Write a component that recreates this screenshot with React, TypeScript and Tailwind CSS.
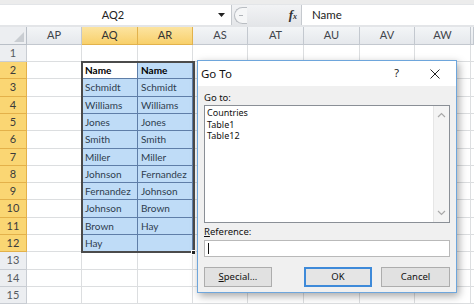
import React from 'react';

const COLS = [
  { n: 'AP', w: 'w-[55px]', sel: false },
  { n: 'AQ', w: 'w-[56px]', sel: true },
  { n: 'AR', w: 'w-[55px]', sel: true },
  { n: 'AS', w: 'w-[55px]', sel: false },
  { n: 'AT', w: 'w-[56px]', sel: false },
  { n: 'AU', w: 'w-[56px]', sel: false },
  { n: 'AV', w: 'w-[55px]', sel: false },
  { n: 'AW', w: 'w-[56px]', sel: false },
  { n: '', w: 'flex-1', sel: false },
];

const ROW_H = [
  'h-[17px]', 'h-[17px]', 'h-[18px]', 'h-[17px]', 'h-[17px]', 'h-[18px]', 'h-[17px]', 'h-[17px]',
  'h-[17px]', 'h-[18px]', 'h-[17px]', 'h-[17px]', 'h-[18px]', 'h-[17px]', 'h-[17px]',
];

const AQ = ['Name', 'Schmidt', 'Williams', 'Jones', 'Smith', 'Miller', 'Johnson', 'Fernandez', 'Johnson', 'Brown', 'Hay'];
const AR = ['Name', 'Schmidt', 'Williams', 'Jones', 'Smith', 'Miller', 'Fernandez', 'Johnson', 'Brown', 'Hay', ''];

const cellFont = { fontFamily: 'Lato, "Liberation Sans", sans-serif' };
const uiFont = { fontFamily: '"Noto Sans", "Open Sans", sans-serif' };

function GridRow({ r }: { r: number }) {
  const selRow = r >= 2 && r <= 12;
  return (
    <div className={`flex ${ROW_H[r - 1]}`}>
      <div
        className={`w-[27px] shrink-0 flex items-center justify-center border-r border-b text-[11px] ${
          selRow ? 'bg-[#fad673] border-[#e3b14a] text-[#3b3b3b]' : 'bg-[#eceef1] border-[#c9cdd3] text-[#555a60]'
        }`}
      >
        {r}
      </div>
      {COLS.map((c) => {
        const inTable = selRow && c.sel;
        const val = inTable ? (c.n === 'AQ' ? AQ[r - 2] : AR[r - 2]) : '';
        const isHead = r === 2 && inTable;
        const active = r === 2 && c.n === 'AQ';
        return (
          <div
            key={c.n}
            className={`${c.w} shrink-0 flex items-center pl-[3px] border-r border-b overflow-hidden whitespace-nowrap text-[10px] ${
              inTable
                ? `${active ? 'bg-white' : 'bg-[#bfdcf7]'} border-[#5f7ea8]`
                : 'bg-white border-[#dcdee0]'
            } ${isHead ? 'font-bold text-black' : 'text-[#2e3d4f]'}`}
          >
            {val}
          </div>
        );
      })}
    </div>
  );
}

function Chevron({ up }: { up: boolean }) {
  return (
    <svg width="9" height="6" viewBox="0 0 9 6">
      <path
        d={up ? 'M1 5 L4.5 1.5 L8 5' : 'M1 1 L4.5 4.5 L8 1'}
        fill="none"
        stroke="#a9a9a9"
        strokeWidth="1.2"
      />
    </svg>
  );
}

export default function App() {
  const rows = Array.from({ length: 15 }, (_, i) => i + 1);
  return (
    <div className="relative w-[474px] h-[305px] overflow-hidden bg-white" style={cellFont}>
      {/* formula bar */}
      <div className="h-[27px] bg-[#e3e5e8] border-t-[4px] border-[#ececec] pt-[1px] pb-[2px]">
        <div className="flex h-[20px]">
          <div className="w-[232px] flex items-center bg-white border-r border-[#c5c9ce]">
            <div className="flex-1 text-center pl-[8px] text-[11px] text-[#222]">AQ2</div>
            <svg width="7" height="4" viewBox="0 0 7 4" className="mr-[6px]">
              <path d="M0 0 L7 0 L3.5 4 Z" fill="#222" />
            </svg>
          </div>
          <div className="w-[70px] flex items-center bg-gradient-to-b from-[#f2f3f5] to-[#e4e6e9] border-r border-[#c5c9ce]">
            <div className="ml-[2px] w-[13px] h-[17px] rounded-l-full border border-r-0 border-[#b9bdc2] bg-[#f5f6f7] flex items-center justify-center">
              <div className="w-[4px] h-[1px] bg-[#b0b4b9]" />
            </div>
            <div className="flex-1" />
            <span
              className="mr-[4px] text-[13px] italic font-bold text-[#333]"
              style={{ fontFamily: '"Liberation Serif", serif' }}
            >
              f<span className="text-[8px]">x</span>
            </span>
          </div>
          <div className="flex-1 flex items-center bg-white pl-[10px] text-[11.5px] text-[#222]">Name</div>
        </div>
      </div>

      {/* column headers */}
      <div className="flex h-[18px]">
        <div className="w-[27px] shrink-0 relative bg-[#eceef1] border-r border-b border-[#b9bfc7]">
          <svg width="10" height="10" viewBox="0 0 10 10" className="absolute right-[2px] bottom-[2px]">
            <path d="M10 0 L10 10 L0 10 Z" fill="#c9cdd2" />
          </svg>
        </div>
        {COLS.map((c) => (
          <div
            key={c.n}
            className={`${c.w} shrink-0 flex items-center justify-center border-r border-b text-[11px] ${
              c.sel
                ? 'bg-gradient-to-b from-[#fce4a0] to-[#f8d06a] border-[#e2b24c] text-[#333]'
                : 'bg-gradient-to-b from-[#f3f5f7] to-[#e5e8ec] border-[#c3c8cf] text-[#3f444a]'
            }`}
          >
            {c.n}
          </div>
        ))}
      </div>

      {/* grid */}
      <div className="relative">
        {rows.map((r) => (
          <GridRow key={r} r={r} />
        ))}
        {/* selection border */}
        <div className="absolute left-[81px] top-[16px] w-[114px] h-[192px] border-2 border-[#4b4b4b]" />
        <div className="absolute left-[191px] top-[205px] w-[5px] h-[5px] bg-[#222] border border-white" />
      </div>

      {/* Go To dialog */}
      <div
        className="absolute left-[197px] top-[60px] w-[260px] h-[233px] flex flex-col bg-[#f0f0f0] border border-[#6ea6dc] shadow-[2px_3px_8px_rgba(0,0,0,0.35)]"
        style={uiFont}
      >
        <div className="h-[25px] shrink-0 bg-white flex items-center pl-[3px] text-[11.5px] text-[#111]">
          <span>Go To</span>
          <div className="flex-1" />
          <span className="mr-[31px] text-[11px] text-[#222]">?</span>
          <svg width="10" height="10" viewBox="0 0 10 10" className="mr-[16px]">
            <path d="M0.5 0.5 L9.5 9.5 M9.5 0.5 L0.5 9.5" stroke="#222" strokeWidth="1" />
          </svg>
        </div>
        <div className="flex-1 flex flex-col px-[6px] pt-[5px] text-[9.5px] text-[#111]">
          <div className="h-[14px] leading-[14px]">Go to:</div>
          <div className="h-[118px] flex bg-white border border-[#8a8f96]">
            <div className="flex-1 pl-[2px] pt-[1px] text-[9px] leading-[11.5px]">
              <div className="h-[11.5px]">Countries</div>
              <div className="h-[11.5px]">Table1</div>
              <div className="h-[11.5px]">Table12</div>
            </div>
            <div className="w-[16px] flex flex-col items-center justify-between py-[6px] bg-[#f4f4f4] border-l border-[#e6e6e6]">
              <Chevron up />
              <Chevron up={false} />
            </div>
          </div>
          <div className="h-[17px] flex items-end pb-[1px]">
            <span>
              <span className="underline">R</span>eference:
            </span>
          </div>
          <div className="h-[17px] flex items-center bg-white border border-[#b9b9b9] pl-[3px]">
            <div className="w-[1px] h-[11px] bg-[#111]" />
          </div>
          <div className="flex mt-[10px] h-[20px]">
            <div className="w-[68px] flex items-center justify-center bg-[#e1e1e1] border border-[#adadad]">
              <span>
                <span className="underline">S</span>pecial...
              </span>
            </div>
            <div className="w-[32px]" />
            <div className="w-[68px] flex items-center justify-center bg-[#e5e5e5] border-2 border-[#3e8ad9]">OK</div>
            <div className="w-[9px]" />
            <div className="w-[69px] flex items-center justify-center bg-[#e1e1e1] border border-[#adadad]">Cancel</div>
          </div>
        </div>
      </div>
    </div>
  );
}
